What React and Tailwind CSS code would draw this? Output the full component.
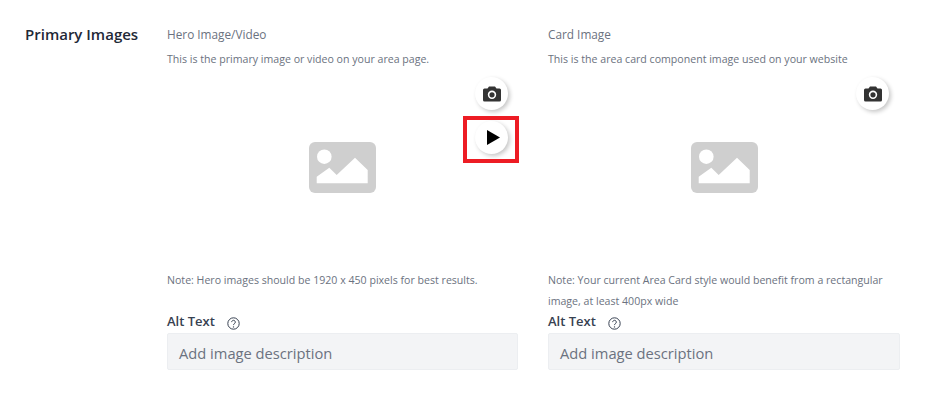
import React from "react";

function Camera() {
  return (
    <svg width="18" height="16" viewBox="0 0 18 16" className="ml-[1px]">
      <path fillRule="evenodd" fill="#333333" d="M6 0.5h6l1.5 2H16.5a1.5 1.5 0 0 1 1.5 1.5v10a1.5 1.5 0 0 1-1.5 1.5h-15A1.5 1.5 0 0 1 0 14V4a1.5 1.5 0 0 1 1.5-1.5H4.5zM9 4.6a4.2 4.2 0 1 0 0 8.4 4.2 4.2 0 0 0 0-8.4zM9 6.2a2.6 2.6 0 1 1 0 5.2 2.6 2.6 0 0 1 0-5.2z" />
    </svg>
  );
}

function RoundButton({ children, className }) {
  return (
    <div className={"absolute left-[308px] flex h-[33px] w-[33px] items-center justify-center rounded-full bg-white shadow-[2px_2px_4px_rgba(0,0,0,0.22)] " + className}>
      {children}
    </div>
  );
}

function Placeholder() {
  return (
    <svg width="67" height="51" viewBox="0 0 67 51">
      <rect width="67" height="51" rx="6" fill="#cfcfcf" />
      <circle cx="15.3" cy="14.7" r="7.3" fill="#ffffff" />
      <path fill="#ffffff" d="M7.700 41.300V34.700L20.300 25.700L27.700 33L46 15.700L58.700 28V41.300z" />
    </svg>
  );
}

function Help() {
  return (
    <svg width="13" height="13" viewBox="0 0 13 13" fill="none" className="ml-[12px] mt-[2px]">
      <circle cx="6.500" cy="6.500" r="5.700" stroke="#374151" strokeWidth="1" />
      <path d="M4.700 5.100a1.800 1.800 0 1 1 2.800 1.500c-.7.4-1 .8-1 1.500" stroke="#374151" strokeWidth="1" />
      <circle cx="6.500" cy="9.900" r=".7" fill="#374151" />
    </svg>
  );
}

function Column({ title, desc, note, width, children }) {
  return (
    <div className={"relative " + width}>
      <div className="mt-[1px] flex h-[13px] items-center text-[11.8px] text-[#6b7280]">{title}</div>
      <div className="mt-[12px] flex h-[13px] items-center text-[10.6px] text-[#6b7280]">{desc}</div>
      <div className="flex h-[203px] items-start justify-center pt-[76px]">
        <Placeholder />
      </div>
      {children}
      <div className="h-[41px] pt-[1px] text-[10.6px] leading-[21px] text-[#6b7280]">{note}</div>
      <div className="mt-[4px] flex h-[16px] items-center text-[13px] font-semibold text-[#374151]">
        Alt Text
        <Help />
      </div>
      <div className="mt-[3px] flex h-[37px] items-center rounded-[2px] border border-[#eceef1] bg-[#f3f4f6] pl-[11px] pt-[3px] text-[14.7px] text-[#6b7280]">
        Add image description
      </div>
    </div>
  );
}

export default function App() {
  return (
    <div className="relative h-[404px] w-[937px] overflow-hidden bg-white pt-[26px] font-['Open_Sans','Noto_Sans',sans-serif]">
      <div className="flex pl-[25px]">
        <div className="w-[142px] text-[15px] font-semibold leading-[16px] text-[#1f2937]">Primary Images</div>
        <div className="flex gap-[30px] pt-[1px]">
          <Column
            width="w-[351px]"
            title="Hero Image/Video"
            desc="This is the primary image or video on your area page."
            note="Note: Hero images should be 1920 x 450 pixels for best results."
          >
            <RoundButton className="top-[50px]"><Camera /></RoundButton>
            <RoundButton className="top-[94px]">
              <svg width="13" height="15" viewBox="0 0 13 15" className="ml-[3px]"><path d="M0 0l13 7.500-13 7.500z" fill="#000" /></svg>
            </RoundButton>
            <div className="absolute left-[296px] top-[89px] h-[47px] w-[56px] border-[4px] border-[#ed1c24]" />
          </Column>
          <Column
            width="w-[352px]"
            title="Card Image"
            desc="This is the area card component image used on your website"
            note={<>Note: Your current Area Card style would benefit from a rectangular<br />image, at least 400px wide</>}
          >
            <RoundButton className="top-[50px]"><Camera /></RoundButton>
          </Column>
        </div>
      </div>
    </div>
  );
}
